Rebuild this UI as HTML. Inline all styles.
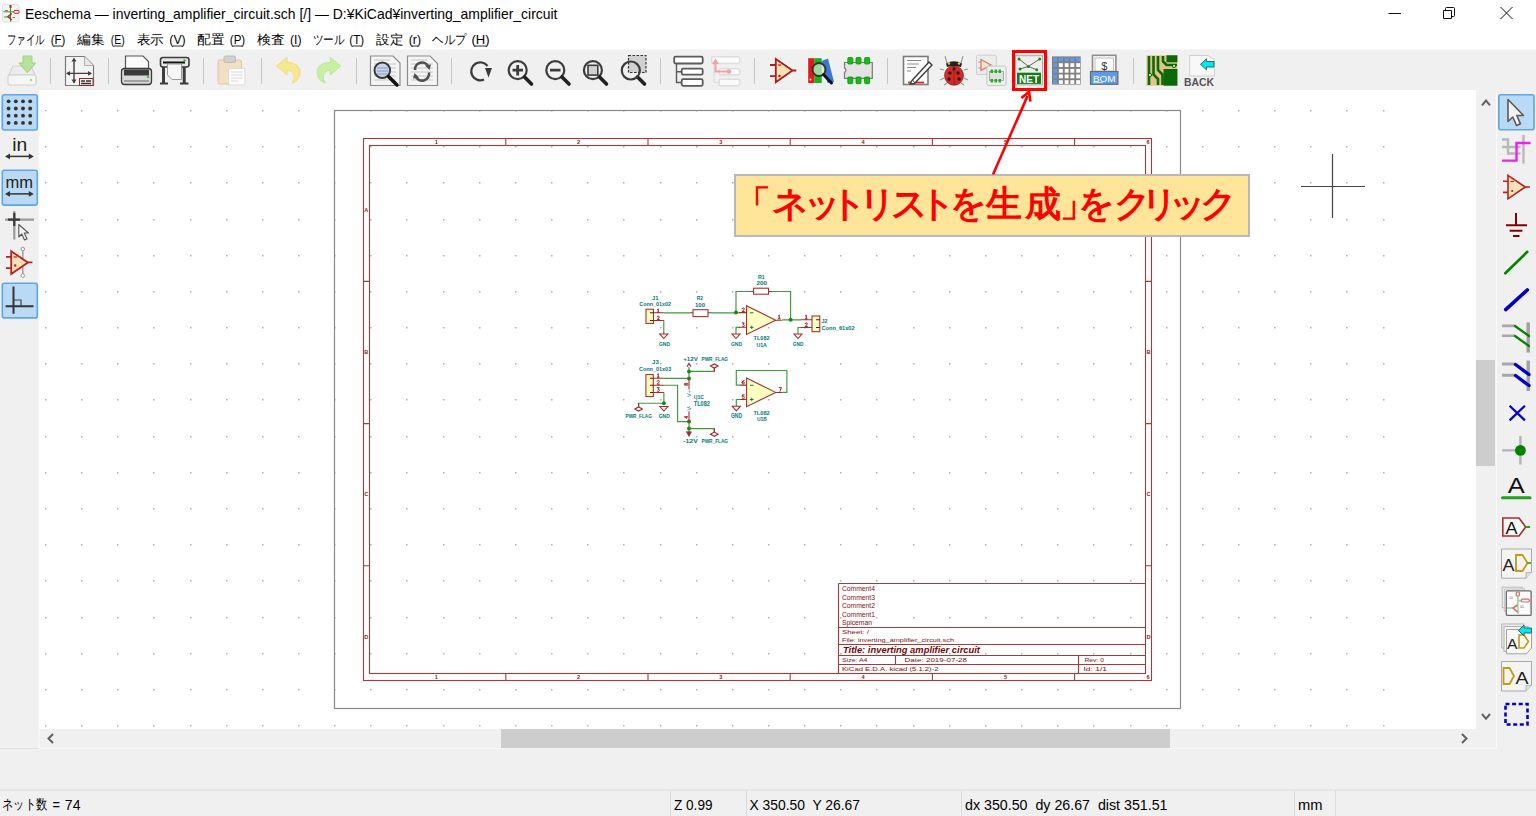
<!DOCTYPE html>
<html><head><meta charset="utf-8"><title>Eeschema</title>
<style>
html,body{margin:0;padding:0;}
body{width:1536px;height:816px;overflow:hidden;position:relative;background:#f0f0f0;font-family:"Liberation Sans",sans-serif;}
svg{position:absolute;left:0;top:0;display:block;}
</style></head><body>
<svg width="1536" height="816" viewBox="0 0 1536 816">
<rect x="0" y="0" width="1536" height="49" fill="#fff"/><rect x="0" y="49" width="1536" height="767" fill="#f0f0f0"/><rect x="0" y="49" width="1536" height="1" fill="#f6f6f6"/><rect x="39" y="90" width="1437" height="639" fill="#fff"/><rect x="0" y="748" width="39" height="1" fill="#e2e2e2"/><rect x="1476" y="90" width="20" height="658" fill="#f0f0f0"/><rect x="39" y="729" width="1437" height="19" fill="#f0f0f0"/><rect x="1476" y="360" width="19" height="106" fill="#cdcdcd"/><rect x="501" y="729" width="669" height="19" fill="#cdcdcd"/><path d="M1482 105.3L1486 100.5L1490 105.3M1482 714L1486 718.8L1490 714" stroke="#606060" stroke-width="2" fill="none"/><path d="M53 734L48.5 738.5L53 743M1462 734L1466.5 738.5L1462 743" stroke="#606060" stroke-width="2" fill="none"/><rect x="39" y="748" width="1457" height="1" fill="#f8f8f8"/><rect x="1496" y="90" width="1" height="658" fill="#fafafa"/><rect x="0" y="789" width="1536" height="2" fill="#e4e4e4"/><rect x="670" y="791" width="1" height="25" fill="#dadada"/><rect x="746" y="791" width="1" height="25" fill="#dadada"/><rect x="961" y="791" width="1" height="25" fill="#dadada"/><rect x="1294" y="791" width="1" height="25" fill="#dadada"/><rect x="1335" y="791" width="1" height="25" fill="#dadada"/><rect x="54.1" y="45.5" width="7.9" height="1" fill="#333"/><rect x="114.0" y="45.5" width="7.4" height="1" fill="#333"/><rect x="172.6" y="45.5" width="9.8" height="1" fill="#333"/><rect x="233.1" y="45.5" width="8.8" height="1" fill="#333"/><rect x="293.2" y="45.5" width="5.0" height="1" fill="#333"/><rect x="352.6" y="45.5" width="8.2" height="1" fill="#333"/><rect x="412.0" y="45.5" width="5.8" height="1" fill="#333"/><rect x="474.7" y="45.5" width="11.5" height="1" fill="#333"/>
<svg x="39" y="90" width="1437" height="639" viewBox="39 90 1437 639">
<path d="M45 110h1.5v1.2h-1.5zM81 110h1.5v1.4h-1.5zM117 110h1.5v1.4h-1.5zM153 110h1.5v1.4h-1.5zM190 110h1.5v1.4h-1.5zM226 110h1.5v1.4h-1.5zM262 110h1.5v1.4h-1.5zM298 110h1.5v1.4h-1.5zM334 110h1.5v1.4h-1.5zM370 110h1.5v1.4h-1.5zM406 110h1.5v1.4h-1.5zM443 110h1.5v1.4h-1.5zM479 110h1.5v1.4h-1.5zM515 110h1.5v1.4h-1.5zM551 110h1.5v1.4h-1.5zM587 110h1.5v1.4h-1.5zM623 110h1.5v1.4h-1.5zM660 110h1.5v1.4h-1.5zM696 110h1.5v1.4h-1.5zM732 110h1.5v1.4h-1.5zM768 110h1.5v1.4h-1.5zM804 110h1.5v1.4h-1.5zM840 110h1.5v1.4h-1.5zM876 110h1.5v1.4h-1.5zM913 110h1.5v1.4h-1.5zM949 110h1.5v1.4h-1.5zM985 110h1.5v1.4h-1.5zM1021 110h1.5v1.4h-1.5zM1057 110h1.5v1.4h-1.5zM1093 110h1.5v1.4h-1.5zM1130 110h1.5v1.4h-1.5zM1166 110h1.5v1.4h-1.5zM1202 110h1.5v1.4h-1.5zM1238 110h1.5v1.4h-1.5zM1274 110h1.5v1.4h-1.5zM1310 110h1.5v1.4h-1.5zM1346 110h1.5v1.4h-1.5zM1383 110h1.5v1.4h-1.5zM45 146h1.5v1.4h-1.5zM81 146h1.5v1.4h-1.5zM117 146h1.5v1.4h-1.5zM153 146h1.5v1.4h-1.5zM190 146h1.5v1.4h-1.5zM226 146h1.5v1.4h-1.5zM262 146h1.5v1.4h-1.5zM298 146h1.5v1.4h-1.5zM334 146h1.5v1.4h-1.5zM370 146h1.5v1.4h-1.5zM406 146h1.5v1.4h-1.5zM443 146h1.5v1.4h-1.5zM479 146h1.5v1.4h-1.5zM515 146h1.5v1.4h-1.5zM551 146h1.5v1.4h-1.5zM587 146h1.5v1.4h-1.5zM623 146h1.5v1.4h-1.5zM660 146h1.5v1.4h-1.5zM696 146h1.5v1.4h-1.5zM732 146h1.5v1.4h-1.5zM768 146h1.5v1.4h-1.5zM804 146h1.5v1.4h-1.5zM840 146h1.5v1.4h-1.5zM876 146h1.5v1.4h-1.5zM913 146h1.5v1.4h-1.5zM949 146h1.5v1.4h-1.5zM985 146h1.5v1.4h-1.5zM1021 146h1.5v1.4h-1.5zM1057 146h1.5v1.4h-1.5zM1093 146h1.5v1.4h-1.5zM1130 146h1.5v1.4h-1.5zM1166 146h1.5v1.4h-1.5zM1202 146h1.5v1.4h-1.5zM1238 146h1.5v1.4h-1.5zM1274 146h1.5v1.4h-1.5zM1310 146h1.5v1.4h-1.5zM1346 146h1.5v1.4h-1.5zM1383 146h1.5v1.4h-1.5zM45 182h1.5v1.4h-1.5zM81 182h1.5v1.4h-1.5zM117 182h1.5v1.4h-1.5zM153 182h1.5v1.4h-1.5zM190 182h1.5v1.4h-1.5zM226 182h1.5v1.4h-1.5zM262 182h1.5v1.4h-1.5zM298 182h1.5v1.4h-1.5zM334 182h1.5v1.4h-1.5zM370 182h1.5v1.4h-1.5zM406 182h1.5v1.4h-1.5zM443 182h1.5v1.4h-1.5zM479 182h1.5v1.4h-1.5zM515 182h1.5v1.4h-1.5zM551 182h1.5v1.4h-1.5zM587 182h1.5v1.4h-1.5zM623 182h1.5v1.4h-1.5zM660 182h1.5v1.4h-1.5zM696 182h1.5v1.4h-1.5zM732 182h1.5v1.4h-1.5zM768 182h1.5v1.4h-1.5zM804 182h1.5v1.4h-1.5zM840 182h1.5v1.4h-1.5zM876 182h1.5v1.4h-1.5zM913 182h1.5v1.4h-1.5zM949 182h1.5v1.4h-1.5zM985 182h1.5v1.4h-1.5zM1021 182h1.5v1.4h-1.5zM1057 182h1.5v1.4h-1.5zM1093 182h1.5v1.4h-1.5zM1130 182h1.5v1.4h-1.5zM1166 182h1.5v1.4h-1.5zM1202 182h1.5v1.4h-1.5zM1238 182h1.5v1.4h-1.5zM1274 182h1.5v1.4h-1.5zM1310 182h1.5v1.4h-1.5zM1346 182h1.5v1.4h-1.5zM1383 182h1.5v1.4h-1.5zM45 219h1.5v1.4h-1.5zM81 219h1.5v1.4h-1.5zM117 219h1.5v1.4h-1.5zM153 219h1.5v1.4h-1.5zM190 219h1.5v1.4h-1.5zM226 219h1.5v1.4h-1.5zM262 219h1.5v1.4h-1.5zM298 219h1.5v1.4h-1.5zM334 219h1.5v1.4h-1.5zM370 219h1.5v1.4h-1.5zM406 219h1.5v1.4h-1.5zM443 219h1.5v1.4h-1.5zM479 219h1.5v1.4h-1.5zM515 219h1.5v1.4h-1.5zM551 219h1.5v1.4h-1.5zM587 219h1.5v1.4h-1.5zM623 219h1.5v1.4h-1.5zM660 219h1.5v1.4h-1.5zM696 219h1.5v1.4h-1.5zM732 219h1.5v1.4h-1.5zM768 219h1.5v1.4h-1.5zM804 219h1.5v1.4h-1.5zM840 219h1.5v1.4h-1.5zM876 219h1.5v1.4h-1.5zM913 219h1.5v1.4h-1.5zM949 219h1.5v1.4h-1.5zM985 219h1.5v1.4h-1.5zM1021 219h1.5v1.4h-1.5zM1057 219h1.5v1.4h-1.5zM1093 219h1.5v1.4h-1.5zM1130 219h1.5v1.4h-1.5zM1166 219h1.5v1.4h-1.5zM1202 219h1.5v1.4h-1.5zM1238 219h1.5v1.4h-1.5zM1274 219h1.5v1.4h-1.5zM1310 219h1.5v1.4h-1.5zM1346 219h1.5v1.4h-1.5zM1383 219h1.5v1.4h-1.5zM45 255h1.5v1.4h-1.5zM81 255h1.5v1.4h-1.5zM117 255h1.5v1.4h-1.5zM153 255h1.5v1.4h-1.5zM190 255h1.5v1.4h-1.5zM226 255h1.5v1.4h-1.5zM262 255h1.5v1.4h-1.5zM298 255h1.5v1.4h-1.5zM334 255h1.5v1.4h-1.5zM370 255h1.5v1.4h-1.5zM406 255h1.5v1.4h-1.5zM443 255h1.5v1.4h-1.5zM479 255h1.5v1.4h-1.5zM515 255h1.5v1.4h-1.5zM551 255h1.5v1.4h-1.5zM587 255h1.5v1.4h-1.5zM623 255h1.5v1.4h-1.5zM660 255h1.5v1.4h-1.5zM696 255h1.5v1.4h-1.5zM732 255h1.5v1.4h-1.5zM768 255h1.5v1.4h-1.5zM804 255h1.5v1.4h-1.5zM840 255h1.5v1.4h-1.5zM876 255h1.5v1.4h-1.5zM913 255h1.5v1.4h-1.5zM949 255h1.5v1.4h-1.5zM985 255h1.5v1.4h-1.5zM1021 255h1.5v1.4h-1.5zM1057 255h1.5v1.4h-1.5zM1093 255h1.5v1.4h-1.5zM1130 255h1.5v1.4h-1.5zM1166 255h1.5v1.4h-1.5zM1202 255h1.5v1.4h-1.5zM1238 255h1.5v1.4h-1.5zM1274 255h1.5v1.4h-1.5zM1310 255h1.5v1.4h-1.5zM1346 255h1.5v1.4h-1.5zM1383 255h1.5v1.4h-1.5zM45 291h1.5v1.4h-1.5zM81 291h1.5v1.4h-1.5zM117 291h1.5v1.4h-1.5zM153 291h1.5v1.4h-1.5zM190 291h1.5v1.4h-1.5zM226 291h1.5v1.4h-1.5zM262 291h1.5v1.4h-1.5zM298 291h1.5v1.4h-1.5zM334 291h1.5v1.4h-1.5zM370 291h1.5v1.4h-1.5zM406 291h1.5v1.4h-1.5zM443 291h1.5v1.4h-1.5zM479 291h1.5v1.4h-1.5zM515 291h1.5v1.4h-1.5zM551 291h1.5v1.4h-1.5zM587 291h1.5v1.4h-1.5zM623 291h1.5v1.4h-1.5zM660 291h1.5v1.4h-1.5zM696 291h1.5v1.4h-1.5zM732 291h1.5v1.4h-1.5zM768 291h1.5v1.4h-1.5zM804 291h1.5v1.4h-1.5zM840 291h1.5v1.4h-1.5zM876 291h1.5v1.4h-1.5zM913 291h1.5v1.4h-1.5zM949 291h1.5v1.4h-1.5zM985 291h1.5v1.4h-1.5zM1021 291h1.5v1.4h-1.5zM1057 291h1.5v1.4h-1.5zM1093 291h1.5v1.4h-1.5zM1130 291h1.5v1.4h-1.5zM1166 291h1.5v1.4h-1.5zM1202 291h1.5v1.4h-1.5zM1238 291h1.5v1.4h-1.5zM1274 291h1.5v1.4h-1.5zM1310 291h1.5v1.4h-1.5zM1346 291h1.5v1.4h-1.5zM1383 291h1.5v1.4h-1.5zM45 327h1.5v1.4h-1.5zM81 327h1.5v1.4h-1.5zM117 327h1.5v1.4h-1.5zM153 327h1.5v1.4h-1.5zM190 327h1.5v1.4h-1.5zM226 327h1.5v1.4h-1.5zM262 327h1.5v1.4h-1.5zM298 327h1.5v1.4h-1.5zM334 327h1.5v1.4h-1.5zM370 327h1.5v1.4h-1.5zM406 327h1.5v1.4h-1.5zM443 327h1.5v1.4h-1.5zM479 327h1.5v1.4h-1.5zM515 327h1.5v1.4h-1.5zM551 327h1.5v1.4h-1.5zM587 327h1.5v1.4h-1.5zM623 327h1.5v1.4h-1.5zM660 327h1.5v1.4h-1.5zM696 327h1.5v1.4h-1.5zM732 327h1.5v1.4h-1.5zM768 327h1.5v1.4h-1.5zM804 327h1.5v1.4h-1.5zM840 327h1.5v1.4h-1.5zM876 327h1.5v1.4h-1.5zM913 327h1.5v1.4h-1.5zM949 327h1.5v1.4h-1.5zM985 327h1.5v1.4h-1.5zM1021 327h1.5v1.4h-1.5zM1057 327h1.5v1.4h-1.5zM1093 327h1.5v1.4h-1.5zM1130 327h1.5v1.4h-1.5zM1166 327h1.5v1.4h-1.5zM1202 327h1.5v1.4h-1.5zM1238 327h1.5v1.4h-1.5zM1274 327h1.5v1.4h-1.5zM1310 327h1.5v1.4h-1.5zM1346 327h1.5v1.4h-1.5zM1383 327h1.5v1.4h-1.5zM45 363h1.5v1.4h-1.5zM81 363h1.5v1.4h-1.5zM117 363h1.5v1.4h-1.5zM153 363h1.5v1.4h-1.5zM190 363h1.5v1.4h-1.5zM226 363h1.5v1.4h-1.5zM262 363h1.5v1.4h-1.5zM298 363h1.5v1.4h-1.5zM334 363h1.5v1.4h-1.5zM370 363h1.5v1.4h-1.5zM406 363h1.5v1.4h-1.5zM443 363h1.5v1.4h-1.5zM479 363h1.5v1.4h-1.5zM515 363h1.5v1.4h-1.5zM551 363h1.5v1.4h-1.5zM587 363h1.5v1.4h-1.5zM623 363h1.5v1.4h-1.5zM660 363h1.5v1.4h-1.5zM696 363h1.5v1.4h-1.5zM732 363h1.5v1.4h-1.5zM768 363h1.5v1.4h-1.5zM804 363h1.5v1.4h-1.5zM840 363h1.5v1.4h-1.5zM876 363h1.5v1.4h-1.5zM913 363h1.5v1.4h-1.5zM949 363h1.5v1.4h-1.5zM985 363h1.5v1.4h-1.5zM1021 363h1.5v1.4h-1.5zM1057 363h1.5v1.4h-1.5zM1093 363h1.5v1.4h-1.5zM1130 363h1.5v1.4h-1.5zM1166 363h1.5v1.4h-1.5zM1202 363h1.5v1.4h-1.5zM1238 363h1.5v1.4h-1.5zM1274 363h1.5v1.4h-1.5zM1310 363h1.5v1.4h-1.5zM1346 363h1.5v1.4h-1.5zM1383 363h1.5v1.4h-1.5zM45 399h1.5v1.4h-1.5zM81 399h1.5v1.4h-1.5zM117 399h1.5v1.4h-1.5zM153 399h1.5v1.4h-1.5zM190 399h1.5v1.4h-1.5zM226 399h1.5v1.4h-1.5zM262 399h1.5v1.4h-1.5zM298 399h1.5v1.4h-1.5zM334 399h1.5v1.4h-1.5zM370 399h1.5v1.4h-1.5zM406 399h1.5v1.4h-1.5zM443 399h1.5v1.4h-1.5zM479 399h1.5v1.4h-1.5zM515 399h1.5v1.4h-1.5zM551 399h1.5v1.4h-1.5zM587 399h1.5v1.4h-1.5zM623 399h1.5v1.4h-1.5zM660 399h1.5v1.4h-1.5zM696 399h1.5v1.4h-1.5zM732 399h1.5v1.4h-1.5zM768 399h1.5v1.4h-1.5zM804 399h1.5v1.4h-1.5zM840 399h1.5v1.4h-1.5zM876 399h1.5v1.4h-1.5zM913 399h1.5v1.4h-1.5zM949 399h1.5v1.4h-1.5zM985 399h1.5v1.4h-1.5zM1021 399h1.5v1.4h-1.5zM1057 399h1.5v1.4h-1.5zM1093 399h1.5v1.4h-1.5zM1130 399h1.5v1.4h-1.5zM1166 399h1.5v1.4h-1.5zM1202 399h1.5v1.4h-1.5zM1238 399h1.5v1.4h-1.5zM1274 399h1.5v1.4h-1.5zM1310 399h1.5v1.4h-1.5zM1346 399h1.5v1.4h-1.5zM1383 399h1.5v1.4h-1.5zM45 436h1.5v1.4h-1.5zM81 436h1.5v1.4h-1.5zM117 436h1.5v1.4h-1.5zM153 436h1.5v1.4h-1.5zM190 436h1.5v1.4h-1.5zM226 436h1.5v1.4h-1.5zM262 436h1.5v1.4h-1.5zM298 436h1.5v1.4h-1.5zM334 436h1.5v1.4h-1.5zM370 436h1.5v1.4h-1.5zM406 436h1.5v1.4h-1.5zM443 436h1.5v1.4h-1.5zM479 436h1.5v1.4h-1.5zM515 436h1.5v1.4h-1.5zM551 436h1.5v1.4h-1.5zM587 436h1.5v1.4h-1.5zM623 436h1.5v1.4h-1.5zM660 436h1.5v1.4h-1.5zM696 436h1.5v1.4h-1.5zM732 436h1.5v1.4h-1.5zM768 436h1.5v1.4h-1.5zM804 436h1.5v1.4h-1.5zM840 436h1.5v1.4h-1.5zM876 436h1.5v1.4h-1.5zM913 436h1.5v1.4h-1.5zM949 436h1.5v1.4h-1.5zM985 436h1.5v1.4h-1.5zM1021 436h1.5v1.4h-1.5zM1057 436h1.5v1.4h-1.5zM1093 436h1.5v1.4h-1.5zM1130 436h1.5v1.4h-1.5zM1166 436h1.5v1.4h-1.5zM1202 436h1.5v1.4h-1.5zM1238 436h1.5v1.4h-1.5zM1274 436h1.5v1.4h-1.5zM1310 436h1.5v1.4h-1.5zM1346 436h1.5v1.4h-1.5zM1383 436h1.5v1.4h-1.5zM45 472h1.5v1.4h-1.5zM81 472h1.5v1.4h-1.5zM117 472h1.5v1.4h-1.5zM153 472h1.5v1.4h-1.5zM190 472h1.5v1.4h-1.5zM226 472h1.5v1.4h-1.5zM262 472h1.5v1.4h-1.5zM298 472h1.5v1.4h-1.5zM334 472h1.5v1.4h-1.5zM370 472h1.5v1.4h-1.5zM406 472h1.5v1.4h-1.5zM443 472h1.5v1.4h-1.5zM479 472h1.5v1.4h-1.5zM515 472h1.5v1.4h-1.5zM551 472h1.5v1.4h-1.5zM587 472h1.5v1.4h-1.5zM623 472h1.5v1.4h-1.5zM660 472h1.5v1.4h-1.5zM696 472h1.5v1.4h-1.5zM732 472h1.5v1.4h-1.5zM768 472h1.5v1.4h-1.5zM804 472h1.5v1.4h-1.5zM840 472h1.5v1.4h-1.5zM876 472h1.5v1.4h-1.5zM913 472h1.5v1.4h-1.5zM949 472h1.5v1.4h-1.5zM985 472h1.5v1.4h-1.5zM1021 472h1.5v1.4h-1.5zM1057 472h1.5v1.4h-1.5zM1093 472h1.5v1.4h-1.5zM1130 472h1.5v1.4h-1.5zM1166 472h1.5v1.4h-1.5zM1202 472h1.5v1.4h-1.5zM1238 472h1.5v1.4h-1.5zM1274 472h1.5v1.4h-1.5zM1310 472h1.5v1.4h-1.5zM1346 472h1.5v1.4h-1.5zM1383 472h1.5v1.4h-1.5zM45 508h1.5v1.4h-1.5zM81 508h1.5v1.4h-1.5zM117 508h1.5v1.4h-1.5zM153 508h1.5v1.4h-1.5zM190 508h1.5v1.4h-1.5zM226 508h1.5v1.4h-1.5zM262 508h1.5v1.4h-1.5zM298 508h1.5v1.4h-1.5zM334 508h1.5v1.4h-1.5zM370 508h1.5v1.4h-1.5zM406 508h1.5v1.4h-1.5zM443 508h1.5v1.4h-1.5zM479 508h1.5v1.4h-1.5zM515 508h1.5v1.4h-1.5zM551 508h1.5v1.4h-1.5zM587 508h1.5v1.4h-1.5zM623 508h1.5v1.4h-1.5zM660 508h1.5v1.4h-1.5zM696 508h1.5v1.4h-1.5zM732 508h1.5v1.4h-1.5zM768 508h1.5v1.4h-1.5zM804 508h1.5v1.4h-1.5zM840 508h1.5v1.4h-1.5zM876 508h1.5v1.4h-1.5zM913 508h1.5v1.4h-1.5zM949 508h1.5v1.4h-1.5zM985 508h1.5v1.4h-1.5zM1021 508h1.5v1.4h-1.5zM1057 508h1.5v1.4h-1.5zM1093 508h1.5v1.4h-1.5zM1130 508h1.5v1.4h-1.5zM1166 508h1.5v1.4h-1.5zM1202 508h1.5v1.4h-1.5zM1238 508h1.5v1.4h-1.5zM1274 508h1.5v1.4h-1.5zM1310 508h1.5v1.4h-1.5zM1346 508h1.5v1.4h-1.5zM1383 508h1.5v1.4h-1.5zM45 544h1.5v1.4h-1.5zM81 544h1.5v1.4h-1.5zM117 544h1.5v1.4h-1.5zM153 544h1.5v1.4h-1.5zM190 544h1.5v1.4h-1.5zM226 544h1.5v1.4h-1.5zM262 544h1.5v1.4h-1.5zM298 544h1.5v1.4h-1.5zM334 544h1.5v1.4h-1.5zM370 544h1.5v1.4h-1.5zM406 544h1.5v1.4h-1.5zM443 544h1.5v1.4h-1.5zM479 544h1.5v1.4h-1.5zM515 544h1.5v1.4h-1.5zM551 544h1.5v1.4h-1.5zM587 544h1.5v1.4h-1.5zM623 544h1.5v1.4h-1.5zM660 544h1.5v1.4h-1.5zM696 544h1.5v1.4h-1.5zM732 544h1.5v1.4h-1.5zM768 544h1.5v1.4h-1.5zM804 544h1.5v1.4h-1.5zM840 544h1.5v1.4h-1.5zM876 544h1.5v1.4h-1.5zM913 544h1.5v1.4h-1.5zM949 544h1.5v1.4h-1.5zM985 544h1.5v1.4h-1.5zM1021 544h1.5v1.4h-1.5zM1057 544h1.5v1.4h-1.5zM1093 544h1.5v1.4h-1.5zM1130 544h1.5v1.4h-1.5zM1166 544h1.5v1.4h-1.5zM1202 544h1.5v1.4h-1.5zM1238 544h1.5v1.4h-1.5zM1274 544h1.5v1.4h-1.5zM1310 544h1.5v1.4h-1.5zM1346 544h1.5v1.4h-1.5zM1383 544h1.5v1.4h-1.5zM45 580h1.5v1.4h-1.5zM81 580h1.5v1.4h-1.5zM117 580h1.5v1.4h-1.5zM153 580h1.5v1.4h-1.5zM190 580h1.5v1.4h-1.5zM226 580h1.5v1.4h-1.5zM262 580h1.5v1.4h-1.5zM298 580h1.5v1.4h-1.5zM334 580h1.5v1.4h-1.5zM370 580h1.5v1.4h-1.5zM406 580h1.5v1.4h-1.5zM443 580h1.5v1.4h-1.5zM479 580h1.5v1.4h-1.5zM515 580h1.5v1.4h-1.5zM551 580h1.5v1.4h-1.5zM587 580h1.5v1.4h-1.5zM623 580h1.5v1.4h-1.5zM660 580h1.5v1.4h-1.5zM696 580h1.5v1.4h-1.5zM732 580h1.5v1.4h-1.5zM768 580h1.5v1.4h-1.5zM804 580h1.5v1.4h-1.5zM840 580h1.5v1.4h-1.5zM876 580h1.5v1.4h-1.5zM913 580h1.5v1.4h-1.5zM949 580h1.5v1.4h-1.5zM985 580h1.5v1.4h-1.5zM1021 580h1.5v1.4h-1.5zM1057 580h1.5v1.4h-1.5zM1093 580h1.5v1.4h-1.5zM1130 580h1.5v1.4h-1.5zM1166 580h1.5v1.4h-1.5zM1202 580h1.5v1.4h-1.5zM1238 580h1.5v1.4h-1.5zM1274 580h1.5v1.4h-1.5zM1310 580h1.5v1.4h-1.5zM1346 580h1.5v1.4h-1.5zM1383 580h1.5v1.4h-1.5zM45 617h1.5v1.4h-1.5zM81 617h1.5v1.4h-1.5zM117 617h1.5v1.4h-1.5zM153 617h1.5v1.4h-1.5zM190 617h1.5v1.4h-1.5zM226 617h1.5v1.4h-1.5zM262 617h1.5v1.4h-1.5zM298 617h1.5v1.4h-1.5zM334 617h1.5v1.4h-1.5zM370 617h1.5v1.4h-1.5zM406 617h1.5v1.4h-1.5zM443 617h1.5v1.4h-1.5zM479 617h1.5v1.4h-1.5zM515 617h1.5v1.4h-1.5zM551 617h1.5v1.4h-1.5zM587 617h1.5v1.4h-1.5zM623 617h1.5v1.4h-1.5zM660 617h1.5v1.4h-1.5zM696 617h1.5v1.4h-1.5zM732 617h1.5v1.4h-1.5zM768 617h1.5v1.4h-1.5zM804 617h1.5v1.4h-1.5zM840 617h1.5v1.4h-1.5zM876 617h1.5v1.4h-1.5zM913 617h1.5v1.4h-1.5zM949 617h1.5v1.4h-1.5zM985 617h1.5v1.4h-1.5zM1021 617h1.5v1.4h-1.5zM1057 617h1.5v1.4h-1.5zM1093 617h1.5v1.4h-1.5zM1130 617h1.5v1.4h-1.5zM1166 617h1.5v1.4h-1.5zM1202 617h1.5v1.4h-1.5zM1238 617h1.5v1.4h-1.5zM1274 617h1.5v1.4h-1.5zM1310 617h1.5v1.4h-1.5zM1346 617h1.5v1.4h-1.5zM1383 617h1.5v1.4h-1.5zM45 653h1.5v1.4h-1.5zM81 653h1.5v1.4h-1.5zM117 653h1.5v1.4h-1.5zM153 653h1.5v1.4h-1.5zM190 653h1.5v1.4h-1.5zM226 653h1.5v1.4h-1.5zM262 653h1.5v1.4h-1.5zM298 653h1.5v1.4h-1.5zM334 653h1.5v1.4h-1.5zM370 653h1.5v1.4h-1.5zM406 653h1.5v1.4h-1.5zM443 653h1.5v1.4h-1.5zM479 653h1.5v1.4h-1.5zM515 653h1.5v1.4h-1.5zM551 653h1.5v1.4h-1.5zM587 653h1.5v1.4h-1.5zM623 653h1.5v1.4h-1.5zM660 653h1.5v1.4h-1.5zM696 653h1.5v1.4h-1.5zM732 653h1.5v1.4h-1.5zM768 653h1.5v1.4h-1.5zM804 653h1.5v1.4h-1.5zM840 653h1.5v1.4h-1.5zM876 653h1.5v1.4h-1.5zM913 653h1.5v1.4h-1.5zM949 653h1.5v1.4h-1.5zM985 653h1.5v1.4h-1.5zM1021 653h1.5v1.4h-1.5zM1057 653h1.5v1.4h-1.5zM1093 653h1.5v1.4h-1.5zM1130 653h1.5v1.4h-1.5zM1166 653h1.5v1.4h-1.5zM1202 653h1.5v1.4h-1.5zM1238 653h1.5v1.4h-1.5zM1274 653h1.5v1.4h-1.5zM1310 653h1.5v1.4h-1.5zM1346 653h1.5v1.4h-1.5zM1383 653h1.5v1.4h-1.5zM45 689h1.5v1.4h-1.5zM81 689h1.5v1.4h-1.5zM117 689h1.5v1.4h-1.5zM153 689h1.5v1.4h-1.5zM190 689h1.5v1.4h-1.5zM226 689h1.5v1.4h-1.5zM262 689h1.5v1.4h-1.5zM298 689h1.5v1.4h-1.5zM334 689h1.5v1.4h-1.5zM370 689h1.5v1.4h-1.5zM406 689h1.5v1.4h-1.5zM443 689h1.5v1.4h-1.5zM479 689h1.5v1.4h-1.5zM515 689h1.5v1.4h-1.5zM551 689h1.5v1.4h-1.5zM587 689h1.5v1.4h-1.5zM623 689h1.5v1.4h-1.5zM660 689h1.5v1.4h-1.5zM696 689h1.5v1.4h-1.5zM732 689h1.5v1.4h-1.5zM768 689h1.5v1.4h-1.5zM804 689h1.5v1.4h-1.5zM840 689h1.5v1.4h-1.5zM876 689h1.5v1.4h-1.5zM913 689h1.5v1.4h-1.5zM949 689h1.5v1.4h-1.5zM985 689h1.5v1.4h-1.5zM1021 689h1.5v1.4h-1.5zM1057 689h1.5v1.4h-1.5zM1093 689h1.5v1.4h-1.5zM1130 689h1.5v1.4h-1.5zM1166 689h1.5v1.4h-1.5zM1202 689h1.5v1.4h-1.5zM1238 689h1.5v1.4h-1.5zM1274 689h1.5v1.4h-1.5zM1310 689h1.5v1.4h-1.5zM1346 689h1.5v1.4h-1.5zM1383 689h1.5v1.4h-1.5zM45 725h1.5v1.4h-1.5zM81 725h1.5v1.4h-1.5zM117 725h1.5v1.4h-1.5zM153 725h1.5v1.4h-1.5zM190 725h1.5v1.4h-1.5zM226 725h1.5v1.4h-1.5zM262 725h1.5v1.4h-1.5zM298 725h1.5v1.4h-1.5zM334 725h1.5v1.4h-1.5zM370 725h1.5v1.4h-1.5zM406 725h1.5v1.4h-1.5zM443 725h1.5v1.4h-1.5zM479 725h1.5v1.4h-1.5zM515 725h1.5v1.4h-1.5zM551 725h1.5v1.4h-1.5zM587 725h1.5v1.4h-1.5zM623 725h1.5v1.4h-1.5zM660 725h1.5v1.4h-1.5zM696 725h1.5v1.4h-1.5zM732 725h1.5v1.4h-1.5zM768 725h1.5v1.4h-1.5zM804 725h1.5v1.4h-1.5zM840 725h1.5v1.4h-1.5zM876 725h1.5v1.4h-1.5zM913 725h1.5v1.4h-1.5zM949 725h1.5v1.4h-1.5zM985 725h1.5v1.4h-1.5zM1021 725h1.5v1.4h-1.5zM1057 725h1.5v1.4h-1.5zM1093 725h1.5v1.4h-1.5zM1130 725h1.5v1.4h-1.5zM1166 725h1.5v1.4h-1.5zM1202 725h1.5v1.4h-1.5zM1238 725h1.5v1.4h-1.5zM1274 725h1.5v1.4h-1.5zM1310 725h1.5v1.4h-1.5zM1346 725h1.5v1.4h-1.5zM1383 725h1.5v1.4h-1.5z" fill="#b0b0b0"/><rect x="334.5" y="110.5" width="846" height="598" fill="none" stroke="#8a8a8a" stroke-width="1.2"/>
<g stroke="#a63a3a" stroke-width="1.1" fill="none">
<rect x="363.5" y="138.5" width="788" height="542"/>
<rect x="369.5" y="145.5" width="776" height="528"/>
<path d="M505.8 138.5V145.5M505.8 673.5V680.5M648.0 138.5V145.5M648.0 673.5V680.5M790.2 138.5V145.5M790.2 673.5V680.5M932.4 138.5V145.5M932.4 673.5V680.5M1074.6 138.5V145.5M1074.6 673.5V680.5M363.5 281.4H369.5M1145.5 281.4H1151.5M363.5 423.6H369.5M1145.5 423.6H1151.5M363.5 565.8H369.5M1145.5 565.8H1151.5M838.5 583.5V673.5M838.5 583.5H1145.5M838.5 627.5H1145.5M838.5 644.5H1145.5M838.5 655.5H1145.5M838.5 664.5H1145.5M895.5 655.5V664.5M1078.5 655.5V673.5"/>
</g>
<text x="436.2" y="144" font-size="5.6" font-weight="bold" text-anchor="middle" font-family="Liberation Sans" fill="#8a1a1a">1</text>
<text x="436.2" y="679" font-size="5.6" font-weight="bold" text-anchor="middle" font-family="Liberation Sans" fill="#8a1a1a">1</text>
<text x="578.5" y="144" font-size="5.6" font-weight="bold" text-anchor="middle" font-family="Liberation Sans" fill="#8a1a1a">2</text>
<text x="578.5" y="679" font-size="5.6" font-weight="bold" text-anchor="middle" font-family="Liberation Sans" fill="#8a1a1a">2</text>
<text x="720.8" y="144" font-size="5.6" font-weight="bold" text-anchor="middle" font-family="Liberation Sans" fill="#8a1a1a">3</text>
<text x="720.8" y="679" font-size="5.6" font-weight="bold" text-anchor="middle" font-family="Liberation Sans" fill="#8a1a1a">3</text>
<text x="863" y="144" font-size="5.6" font-weight="bold" text-anchor="middle" font-family="Liberation Sans" fill="#8a1a1a">4</text>
<text x="863" y="679" font-size="5.6" font-weight="bold" text-anchor="middle" font-family="Liberation Sans" fill="#8a1a1a">4</text>
<text x="1005.5" y="144" font-size="5.6" font-weight="bold" text-anchor="middle" font-family="Liberation Sans" fill="#8a1a1a">5</text>
<text x="1005.5" y="679" font-size="5.6" font-weight="bold" text-anchor="middle" font-family="Liberation Sans" fill="#8a1a1a">5</text>
<text x="1148" y="144" font-size="5.6" font-weight="bold" text-anchor="middle" font-family="Liberation Sans" fill="#8a1a1a">6</text>
<text x="1148" y="679" font-size="5.6" font-weight="bold" text-anchor="middle" font-family="Liberation Sans" fill="#8a1a1a">6</text>
<text x="366.3" y="211.8" font-size="5.6" font-weight="bold" text-anchor="middle" font-family="Liberation Sans" fill="#8a1a1a">A</text>
<text x="1148.5" y="211.8" font-size="5.6" font-weight="bold" text-anchor="middle" font-family="Liberation Sans" fill="#8a1a1a">A</text>
<text x="366.3" y="354.3" font-size="5.6" font-weight="bold" text-anchor="middle" font-family="Liberation Sans" fill="#8a1a1a">B</text>
<text x="1148.5" y="354.3" font-size="5.6" font-weight="bold" text-anchor="middle" font-family="Liberation Sans" fill="#8a1a1a">B</text>
<text x="366.3" y="496.3" font-size="5.6" font-weight="bold" text-anchor="middle" font-family="Liberation Sans" fill="#8a1a1a">C</text>
<text x="1148.5" y="496.3" font-size="5.6" font-weight="bold" text-anchor="middle" font-family="Liberation Sans" fill="#8a1a1a">C</text>
<text x="366.3" y="638.8" font-size="5.6" font-weight="bold" text-anchor="middle" font-family="Liberation Sans" fill="#8a1a1a">D</text>
<text x="1148.5" y="638.8" font-size="5.6" font-weight="bold" text-anchor="middle" font-family="Liberation Sans" fill="#8a1a1a">D</text>
<text x="842" y="591.2" font-size="6.5" textLength="33" lengthAdjust="spacingAndGlyphs" font-family="Liberation Sans" font-weight="normal" font-style="normal" fill="#7e1010">Comment4</text>
<text x="842" y="599.8" font-size="6.5" textLength="33" lengthAdjust="spacingAndGlyphs" font-family="Liberation Sans" font-weight="normal" font-style="normal" fill="#7e1010">Comment3</text>
<text x="842" y="608.0" font-size="6.5" textLength="33" lengthAdjust="spacingAndGlyphs" font-family="Liberation Sans" font-weight="normal" font-style="normal" fill="#7e1010">Comment2</text>
<text x="842" y="616.6" font-size="6.5" textLength="33" lengthAdjust="spacingAndGlyphs" font-family="Liberation Sans" font-weight="normal" font-style="normal" fill="#7e1010">Comment1</text>
<text x="842" y="625.2" font-size="6.8" textLength="30" lengthAdjust="spacingAndGlyphs" font-family="Liberation Sans" font-weight="normal" font-style="normal" fill="#7e1010">Spiceman</text>
<text x="842" y="633.8" font-size="6.2" textLength="27" lengthAdjust="spacingAndGlyphs" font-family="Liberation Sans" font-weight="normal" font-style="normal" fill="#7e1010">Sheet: /</text>
<text x="842" y="641.8" font-size="6.2" textLength="112" lengthAdjust="spacingAndGlyphs" font-family="Liberation Sans" font-weight="normal" font-style="normal" fill="#7e1010">File: inverting_amplifier_circuit.sch</text>
<text x="842" y="662.3" font-size="5.8" textLength="25.5" lengthAdjust="spacingAndGlyphs" font-family="Liberation Sans" font-weight="normal" font-style="normal" fill="#7e1010">Size: A4</text>
<text x="904.5" y="662.3" font-size="5.8" textLength="62.5" lengthAdjust="spacingAndGlyphs" font-family="Liberation Sans" font-weight="normal" font-style="normal" fill="#7e1010">Date: 2019-07-28</text>
<text x="842" y="670.8" font-size="5.8" textLength="96.5" lengthAdjust="spacingAndGlyphs" font-family="Liberation Sans" font-weight="normal" font-style="normal" fill="#7e1010">KiCad E.D.A.  kicad (5.1.2)-2</text>
<text x="1084.5" y="662.3" font-size="5.8" textLength="19.5" lengthAdjust="spacingAndGlyphs" font-family="Liberation Sans" font-weight="normal" font-style="normal" fill="#7e1010">Rev: 0</text>
<text x="1083.5" y="670.8" font-size="5.8" textLength="23.5" lengthAdjust="spacingAndGlyphs" font-family="Liberation Sans" font-weight="normal" font-style="normal" fill="#7e1010">Id: 1/1</text>
<text x="843" y="652.8" font-size="8.4" textLength="137" lengthAdjust="spacingAndGlyphs" font-family="Liberation Sans" font-weight="bold" font-style="italic" fill="#700808">Title: inverting amplifier circuit</text><path d="M663.8 312.8H690M711 312.8H739M736 312.8V291.5H751M772.4 291.5H790.6V319.8M782.3 319.8H801M663.8 320.5V332M740 327.3H736V334M801 327.5H798V334M663.9 378.3H689M663.9 385.2H677.6V421.6H689M663.9 392.5V403.2H638.6V407M689 371.4H714.3V368M689 428.6H714.3V432M689 367V378.5M689 421.6V431.8M740 385.1H736.3V370.5H786.9V392.4H782.2M740 399.5H736.3V406.3" stroke="#3c9c3c" stroke-width="1.15" fill="none"/>
<circle cx="736" cy="312.6" r="2" fill="#1a8a1a"/><circle cx="790.6" cy="319.8" r="2" fill="#1a8a1a"/><circle cx="663.9" cy="403.2" r="2" fill="#1a8a1a"/><circle cx="689" cy="371.4" r="2" fill="#1a8a1a"/><circle cx="689" cy="378.4" r="2" fill="#1a8a1a"/><circle cx="689" cy="421.6" r="2" fill="#1a8a1a"/><circle cx="689" cy="428.6" r="2" fill="#1a8a1a"/>
<path d="M650 312.8H663.8M650 320.5H663.8M690 312.8H693M708 312.8H711M751 291.5H753.6M768.5 291.5H772.4M739 312.6H746.5M739 327.3H746.5M775.7 320.2H782.3M801 319.8H816M801 327.5H816M650 378.3H663.9M650 385.2H663.9M650 392.5H663.9M740 385.1H746.6M740 399.5H746.6M775.7 392.4H782.2M689 378.5V389.6M689 411.3V421.6" stroke="#a52a2a" stroke-width="1.05" fill="none"/>
<rect x="646" y="309.2" width="7.5" height="14.2" fill="#ffffc2" stroke="#a52a2a" stroke-width="1.05"/><rect x="812" y="316" width="7.8" height="15.7" fill="#ffffc2" stroke="#a52a2a" stroke-width="1.05"/><rect x="645.9" y="374.6" width="7.4" height="22" fill="#ffffc2" stroke="#a52a2a" stroke-width="1.05"/><rect x="693" y="309.7" width="15" height="6.9" fill="none" stroke="#a52a2a" stroke-width="1.05"/><rect x="753.6" y="288.2" width="14.9" height="6" fill="none" stroke="#a52a2a" stroke-width="1.05"/><path d="M746.5 305.8L775.7 320.2L746.5 334.5Z" fill="#ffffc2" stroke="#a52a2a" stroke-width="1.05"/><path d="M746.6 378L775.7 392.4L746.6 406.7Z" fill="#ffffc2" stroke="#a52a2a" stroke-width="1.05"/><path d="M663.8 332V334M659.8 334H667.8L663.8 338.5ZM732.0 334H740.0L736.0 338.5ZM794.0 334H802.0L798.0 338.5ZM732.3 406.3H740.3L736.3 410.8ZM659.9 406.5H667.9L663.9 411.0Z" fill="none" stroke="#a52a2a" stroke-width="1.1"/><path d="M634.8 409.0L638.6 406.9L642.4 409.0L638.6 411.1ZM710.5 366.0L714.3 363.9L718.1 366.0L714.3 368.1ZM710.5 434.2L714.3 432.1L718.1 434.2L714.3 436.3Z" fill="none" stroke="#a52a2a" stroke-width="1.1"/><path d="M714.3 368.1V371.4M714.3 432.1V428.6M638.6 406.9V403.2" stroke="#a52a2a" stroke-width="1.1"/><path d="M687 366.8L689 363.4L691 366.8" fill="none" stroke="#a52a2a" stroke-width="1.1"/><path d="M686.5 431.8H691.3L689 436.4Z" fill="#a52a2a" stroke="#a52a2a" stroke-width="0.8"/><path d="M650 312.8H653.5M650 320.5H653.5M816 319.8H819.8M816 327.5H819.8M650 378.3H653.3M650 385.2H653.3M650 392.5H653.3" stroke="#6a1010" stroke-width="1.05"/>
<path d="M750 312.8H753.5M750 327.3H753.5M751.75 325.6V329M750 385.3H753.5M750 399.5H753.5M751.75 397.8V401.2" stroke="#007a7a" stroke-width="1"/>
<path d="M657.46 309.48 L658.25 308.80 V312.20 M657.46 312.20 H659.04 M657.20 316.80 Q657.43 316.10 658.25 316.10 Q659.30 316.10 659.30 317.03 Q659.30 317.62 657.20 319.60 H659.30 M742.14 308.64 Q742.39 307.90 743.25 307.90 Q744.36 307.90 744.36 308.89 Q744.36 309.50 742.14 311.60 H744.36 M742.23 322.90 H744.21 L743.13 324.40 Q744.33 324.40 744.33 325.42 Q744.33 326.50 743.25 326.50 Q742.53 326.50 742.17 326.02 M778.39 315.84 L779.25 315.10 V318.80 M778.39 318.80 H780.11 M805.39 315.84 L806.25 315.10 V318.80 M805.39 318.80 H807.11 M805.17 323.62 Q805.41 322.90 806.25 322.90 Q807.33 322.90 807.33 323.86 Q807.33 324.46 805.17 326.50 H807.33 M657.41 374.32 L658.25 373.60 V377.20 M657.41 377.20 H659.09 M657.14 381.24 Q657.39 380.50 658.25 380.50 Q659.36 380.50 659.36 381.49 Q659.36 382.10 657.14 384.20 H659.36 M657.20 387.70 H659.24 L658.13 389.24 Q659.36 389.24 659.36 390.29 Q659.36 391.40 658.25 391.40 Q657.51 391.40 657.14 390.91 M744.11 380.42 Q742.14 380.67 742.14 382.77 Q742.14 384.00 743.25 384.00 Q744.36 384.00 744.36 382.89 Q744.36 381.90 743.25 381.90 Q742.45 381.90 742.14 382.52 M744.24 394.80 H742.39 L742.20 396.59 Q742.63 396.28 743.25 396.28 Q744.36 396.28 744.36 397.39 Q744.36 398.50 743.25 398.50 Q742.51 398.50 742.14 398.01 M779.14 387.60 H781.36 L780.00 391.30 " fill="none" stroke="#9a1010" stroke-width="0.95" stroke-linecap="round" stroke-linejoin="round"/>
<path transform="translate(684.3,385.5) rotate(-90) scale(0.6)" d="M2 2.7Q0.3 2.7 0.3 1.35Q0.3 0 2 0Q3.7 0 3.7 1.35Q3.7 2.7 2 2.7Q0.2 2.7 0.2 4.35Q0.2 6 2 6Q3.8 6 3.8 4.35Q3.8 2.7 2 2.7" fill="none" stroke="#9a1010" stroke-width="1.5"/>
<path transform="translate(684.3,418.5) rotate(-90) scale(0.6)" d="M2.8 6V0L0.2 4.2H3.8" fill="none" stroke="#9a1010" stroke-width="1.5"/>
<text transform="translate(691,393.5) rotate(-90)" font-size="5.5" text-anchor="middle" font-family="Liberation Sans" fill="#007a7a">V+</text>
<text transform="translate(691,408) rotate(-90)" font-size="5.5" text-anchor="middle" font-family="Liberation Sans" fill="#007a7a">V-</text>
<text x="652" y="300" font-size="5.49" textLength="6.4" lengthAdjust="spacingAndGlyphs" font-family="Liberation Sans" font-weight="bold" fill="#007a7a" style="white-space:pre">J1</text>
<text x="639.3" y="306.3" font-size="6.04" textLength="31.7" lengthAdjust="spacingAndGlyphs" font-family="Liberation Sans" font-weight="bold" fill="#007a7a" style="white-space:pre">Conn_01x02</text>
<text x="696.7" y="300" font-size="5.49" textLength="6.3" lengthAdjust="spacingAndGlyphs" font-family="Liberation Sans" font-weight="bold" fill="#007a7a" style="white-space:pre">R2</text>
<text x="695" y="306.8" font-size="5.49" textLength="10.0" lengthAdjust="spacingAndGlyphs" font-family="Liberation Sans" font-weight="bold" fill="#007a7a" style="white-space:pre">100</text>
<text x="659" y="346" font-size="6.17" textLength="11.0" lengthAdjust="spacingAndGlyphs" font-family="Liberation Sans" font-weight="bold" fill="#007a7a" style="white-space:pre">GND</text>
<text x="758" y="278.8" font-size="6.04" textLength="6.7" lengthAdjust="spacingAndGlyphs" font-family="Liberation Sans" font-weight="bold" fill="#007a7a" style="white-space:pre">R1</text>
<text x="756.4" y="285.4" font-size="6.04" textLength="10.5" lengthAdjust="spacingAndGlyphs" font-family="Liberation Sans" font-weight="bold" fill="#007a7a" style="white-space:pre">200</text>
<text x="753.6" y="340" font-size="5.49" textLength="16.0" lengthAdjust="spacingAndGlyphs" font-family="Liberation Sans" font-weight="bold" fill="#007a7a" style="white-space:pre">TL082</text>
<text x="756.4" y="347.2" font-size="6.04" textLength="10.5" lengthAdjust="spacingAndGlyphs" font-family="Liberation Sans" font-weight="bold" fill="#007a7a" style="white-space:pre">U1A</text>
<text x="731" y="346" font-size="5.90" textLength="11.0" lengthAdjust="spacingAndGlyphs" font-family="Liberation Sans" font-weight="bold" fill="#007a7a" style="white-space:pre">GND</text>
<text x="792.8" y="346" font-size="5.90" textLength="10.5" lengthAdjust="spacingAndGlyphs" font-family="Liberation Sans" font-weight="bold" fill="#007a7a" style="white-space:pre">GND</text>
<text x="821.5" y="323" font-size="6.17" textLength="6.0" lengthAdjust="spacingAndGlyphs" font-family="Liberation Sans" font-weight="bold" fill="#007a7a" style="white-space:pre">J2</text>
<text x="821.5" y="330" font-size="5.90" textLength="33.1" lengthAdjust="spacingAndGlyphs" font-family="Liberation Sans" font-weight="bold" fill="#007a7a" style="white-space:pre">Conn_01x02</text>
<text x="652.1" y="364.4" font-size="5.21" textLength="6.6" lengthAdjust="spacingAndGlyphs" font-family="Liberation Sans" font-weight="bold" fill="#007a7a" style="white-space:pre">J3</text>
<text x="639" y="371.3" font-size="5.35" textLength="32.2" lengthAdjust="spacingAndGlyphs" font-family="Liberation Sans" font-weight="bold" fill="#007a7a" style="white-space:pre">Conn_01x03</text>
<text x="625.5" y="418" font-size="5.90" textLength="26.4" lengthAdjust="spacingAndGlyphs" font-family="Liberation Sans" font-weight="bold" fill="#007a7a" style="white-space:pre">PWR_FLAG</text>
<text x="658.7" y="418" font-size="5.90" textLength="11.2" lengthAdjust="spacingAndGlyphs" font-family="Liberation Sans" font-weight="bold" fill="#007a7a" style="white-space:pre">GND</text>
<text x="683.2" y="360.9" font-size="5.90" textLength="14.6" lengthAdjust="spacingAndGlyphs" font-family="Liberation Sans" font-weight="bold" fill="#007a7a" style="white-space:pre">+12V</text>
<text x="701.5" y="360.9" font-size="5.90" textLength="26.5" lengthAdjust="spacingAndGlyphs" font-family="Liberation Sans" font-weight="bold" fill="#007a7a" style="white-space:pre">PWR_FLAG</text>
<text x="683.2" y="442.6" font-size="5.35" textLength="14.6" lengthAdjust="spacingAndGlyphs" font-family="Liberation Sans" font-weight="bold" fill="#007a7a" style="white-space:pre">-12V</text>
<text x="701.5" y="442.6" font-size="5.35" textLength="26.5" lengthAdjust="spacingAndGlyphs" font-family="Liberation Sans" font-weight="bold" fill="#007a7a" style="white-space:pre">PWR_FLAG</text>
<text x="693.8" y="398.7" font-size="5.90" textLength="10.3" lengthAdjust="spacingAndGlyphs" font-family="Liberation Sans" font-weight="bold" fill="#007a7a" style="white-space:pre">U1C</text>
<text x="693.8" y="405.6" font-size="6.31" textLength="16.0" lengthAdjust="spacingAndGlyphs" font-family="Liberation Sans" font-weight="bold" fill="#007a7a" style="white-space:pre">TL082</text>
<text x="731" y="418.3" font-size="6.45" textLength="11.0" lengthAdjust="spacingAndGlyphs" font-family="Liberation Sans" font-weight="bold" fill="#007a7a" style="white-space:pre">GND</text>
<text x="753.4" y="414.5" font-size="5.90" textLength="16.3" lengthAdjust="spacingAndGlyphs" font-family="Liberation Sans" font-weight="bold" fill="#007a7a" style="white-space:pre">TL082</text>
<text x="756.9" y="420.9" font-size="5.35" textLength="9.8" lengthAdjust="spacingAndGlyphs" font-family="Liberation Sans" font-weight="bold" fill="#007a7a" style="white-space:pre">U1B</text><path d="M1332.5 154V218M1301 186.5H1365" stroke="#444" stroke-width="1.2"/>
</svg>
<g>
<rect x="2.5" y="4.5" width="16.5" height="17.5" rx="1.5" fill="#f4f4f4" stroke="#e0e0e0" stroke-width="1"/>
<path d="M10.5 6V21.5M3.5 11.8H15M4 17H10" stroke="#22a022" stroke-width="1"/>
<rect x="14" y="10.3" width="5" height="3" rx="1" fill="#fff" stroke="#c02020" stroke-width="1"/>
<path d="M11.8 13.5L8 16.5L11.8 20" fill="none" stroke="#c02020" stroke-width="1.4"/>
<rect x="9.5" y="5" width="2" height="3" fill="#c02020"/>
<path d="M5 10.5H8M12.5 17.5H15" stroke="#666" stroke-width="0.8"/>
</g>
<path d="M1388.5 13.5H1401" stroke="#111" stroke-width="1"/>
<path d="M1443.5 10.5H1451.5V18.5H1443.5ZM1445.5 10.5V8.5Q1445.5 7.5 1446.5 7.5H1453.5Q1454.5 7.5 1454.5 8.5V15.5Q1454.5 16.5 1453.5 16.5H1451.5" fill="none" stroke="#111" stroke-width="1"/>
<path d="M1500.5 7L1512.5 19M1512.5 7L1500.5 19" stroke="#111" stroke-width="1"/>

<g id="seps" fill="#c6c6c6">
<rect x="50" y="58" width="1" height="26"/><rect x="108" y="58" width="1" height="26"/><rect x="203" y="58" width="1" height="26"/>
<rect x="261" y="58" width="1" height="26"/><rect x="356" y="58" width="1" height="26"/><rect x="451" y="58" width="1" height="26"/>
<rect x="660" y="58" width="1" height="26"/><rect x="754" y="58" width="1" height="26"/><rect x="887" y="58" width="1" height="26"/>
<rect x="1133" y="58" width="1" height="26"/>
</g>
<!-- save (disabled) -->
<g>
<path d="M9 75L13 66H31L35 75Z" fill="#ececec" stroke="#d4d4d4" stroke-width="1.2"/>
<rect x="8" y="75" width="28" height="10" rx="1.5" fill="#f6f6f6" stroke="#d0d0d0" stroke-width="1.2"/>
<circle cx="31" cy="80" r="1.2" fill="#9be08a"/>
<path d="M23 56H32V63H35.8L27.4 72.8L19 63H23Z" fill="#b8e296" stroke="#a4cf84" stroke-width="1"/>
</g>
<!-- page settings -->
<g>
<path d="M65.5 56.5H84.5L93.5 65.5V85.5H65.5Z" fill="#f4f4f4" stroke="#7a7a7a" stroke-width="1.2"/>
<path d="M84.5 56.5V65.5H93.5" fill="#e8e8e8" stroke="#b0b0b0" stroke-width="1"/>
<path d="M74 59V83M67 73.4H91" stroke="#404040" stroke-width="1.4"/>
<path d="M71.5 61.5L74 57.5L76.5 61.5ZM71.5 79.5L74 83.5L76.5 79.5ZM70 71L66 73.4L70 75.8ZM88 71L92 73.4L88 75.8Z" fill="#404040"/>
<rect x="79.5" y="78.5" width="13.5" height="7" fill="#f4f4f4" stroke="#8a2a2a" stroke-width="1"/>
<path d="M81 81H85M86 81H91M81 83.5H91" stroke="#333" stroke-width="1.3"/>
</g>
<!-- print -->
<g>
<path d="M125.5 56H143L148.5 61.5V70H125.5Z" fill="#fafafa" stroke="#555" stroke-width="1.2"/>
<rect x="121.5" y="68.5" width="30" height="16" rx="3" fill="#d8d8d8" stroke="#3a3a3a" stroke-width="1.3"/>
<rect x="124" y="69.5" width="25" height="6" fill="#3a3a3a"/>
<rect x="124" y="80" width="25" height="2" fill="#a0a0a0"/>
<circle cx="148" cy="77" r="1.2" fill="#3c3"/>
</g>
<!-- plot -->
<g>
<rect x="160.5" y="57.5" width="28.5" height="9.5" rx="2.5" fill="#e6e6e6" stroke="#3c3c3c" stroke-width="1.6"/>
<rect x="163" y="61.5" width="22" height="2" fill="#111"/>
<circle cx="184.5" cy="60.5" r="1.3" fill="#2c2"/>
<path d="M163.5 67V83M184.2 67V83" stroke="#3c3c3c" stroke-width="3"/>
<path d="M160 83.5H168M180 83.5H188.5" stroke="#3c3c3c" stroke-width="2"/>
<path d="M167.5 64H181.5V79.5H172L167.5 75Z" fill="#f6f6f6" stroke="#9a9a9a" stroke-width="1"/>
</g>
<!-- paste (disabled) -->
<g>
<rect x="218" y="60" width="23.5" height="24" rx="2" fill="#f2dfc4" stroke="#dcc7aa" stroke-width="1"/>
<rect x="224" y="56" width="11.5" height="6.5" rx="1.5" fill="#cfcfcf" stroke="#bdbdbd" stroke-width="1"/>
<rect x="228.5" y="68.5" width="16.5" height="16.5" fill="#fdfdfd" stroke="#dadada" stroke-width="1"/>
<path d="M231 72H243M231 75H243M231 78H243M231 81H238" stroke="#d8d8d8" stroke-width="1"/>
</g>
<!-- undo (disabled) -->
<path d="M276.5 66L287 57.3V62.5C297 62.5 302 68 299.5 76C298 80 295 82.5 292 82.8C295.5 79 295 71 287 70V75Z" fill="#f6e88e" stroke="#e8d878" stroke-width="0.8"/>
<!-- redo (disabled) -->
<path d="M340.8 66L330.3 57.3V62.5C320.3 62.5 315.3 68 317.8 76C319.3 80 322.3 82.5 325.3 82.8C321.8 79 322.3 71 330.3 70V75Z" fill="#c8f0a2" stroke="#b6e08e" stroke-width="0.8"/>
<!-- find -->
<g>
<path d="M370.5 56H393L400 63V85.5H370.5Z" fill="#f4f4f4" stroke="#8c8c8c" stroke-width="1.2"/>
<path d="M374 60H390M374 64H396M374 68H396M374 72H396M374 76H396M374 80H396" stroke="#c8c8c8" stroke-width="1"/>
<circle cx="382.3" cy="70.3" r="7.8" fill="#c9d6ee" stroke="#3a3a3a" stroke-width="2"/>
<path d="M377 68H388M377 71H388M377 74H388" stroke="#8a9ab8" stroke-width="1"/>
<path d="M388.5 76.5L397 85" stroke="#111" stroke-width="3.5" stroke-linecap="round"/>
</g>
<!-- find replace -->
<g>
<path d="M407.5 56H430L437.5 63.5V85.5H407.5Z" fill="#f4f4f4" stroke="#8c8c8c" stroke-width="1.2"/>
<path d="M411 60H427M411 64H433M411 68H433M411 72H433M411 76H433M411 80H433" stroke="#c8c8c8" stroke-width="1"/>
<path d="M415 70A7 7 0 0 1 428.5 67" fill="none" stroke="#505050" stroke-width="2.6"/>
<path d="M425 65.5L431 64.5L429.5 70Z" fill="#505050"/>
<path d="M429 72.5A7 7 0 0 1 415.5 76" fill="none" stroke="#505050" stroke-width="2.6"/>
<path d="M419 77.5L413 78.5L414.5 73Z" fill="#505050"/>
</g>
<!-- redraw -->
<g>
<path d="M487.5 66A9 9 0 1 0 484 79.5" fill="none" stroke="#3a3a3a" stroke-width="2.2"/>
<path d="M485 68H492L488.5 77.5Z" fill="#3a3a3a"/>
</g>
<!-- zoom in/out/fit/sel -->
<g stroke="#3c3c3c" fill="none">
<circle cx="517.7" cy="70.2" r="9" stroke-width="2.2"/>
<circle cx="555.3" cy="70.2" r="9" stroke-width="2.2"/>
<circle cx="592.9" cy="70.2" r="9" stroke-width="2.2"/>
<path d="M512.5 70.2H523M517.7 65V75.5M550 70.2H560.5" stroke-width="2.8"/>
<rect x="588" y="65.3" width="9.8" height="9.8" stroke-width="1.6" fill="#d0d0d0"/>
<path d="M524.5 77L531.5 84M562 77L569 84M599.5 77L606.5 84M637.5 77L644.5 84" stroke="#222" stroke-width="3.6" stroke-linecap="round"/>
</g>
<rect x="628.5" y="55.5" width="17.5" height="17" fill="#d0d0d0" stroke="#333" stroke-width="1.2" stroke-dasharray="2.5 1.5"/>
<circle cx="630.8" cy="70.5" r="9" fill="none" stroke="#3c3c3c" stroke-width="2.2"/>
<!-- hierarchy -->
<g fill="#fff" stroke="#5a5a5a" stroke-width="1.8">
<path d="M676.5 63.5V82.5H681.7M676.5 71.7H681.7" fill="none" stroke-width="1.4"/>
<rect x="674.2" y="56.7" width="28.5" height="6.8" rx="1.5"/>
<rect x="681.7" y="68.7" width="21" height="6" rx="1.5"/>
<rect x="681.7" y="79.2" width="21" height="6.6" rx="1.5"/>
</g>
<!-- leave sheet (disabled) -->
<g fill="#fbfbfb" stroke="#dedede" stroke-width="1.6">
<path d="M714 63.5V82.5H719.2" fill="none" stroke-width="1.2"/>
<rect x="711.7" y="56.7" width="28" height="6.8" rx="1.5"/>
<rect x="719.2" y="68.7" width="20.5" height="6" rx="1.5"/>
<rect x="719.2" y="79.2" width="20.5" height="6.6" rx="1.5"/>
</g>
<path d="M715.5 62V71.5H728" fill="none" stroke="#f0a2a2" stroke-width="2"/>
<path d="M712 64L715.5 58.5L719 64Z" fill="#f0a2a2"/>
<circle cx="729" cy="71.5" r="2.3" fill="#f0a2a2"/>
<!-- symbol editor -->
<g>
<path d="M770 65H775.3M770 76.2H775.3M792.5 70.5H796.3" stroke="#b01c1c" stroke-width="1.8"/>
<path d="M775.8 59L792.5 70.5L775.8 82.2Z" fill="#f5e2b8" stroke="#b01c1c" stroke-width="1.8"/>
<path d="M778 65H781" stroke="#b01c1c" stroke-width="1.2"/>
<circle cx="779.5" cy="76" r="1.2" fill="#b01c1c"/>
</g>
<!-- library browser -->
<g>
<rect x="808.2" y="58.2" width="6" height="24.8" fill="#e01a1a"/>
<rect x="814.2" y="58.2" width="7.5" height="24.8" fill="#19b019"/>
<path d="M821.7 61L828 58.5L834 82L827.5 83Z" fill="#3a78d8"/>
<circle cx="819" cy="69.5" r="6.5" fill="#d8e8d8" fill-opacity="0.7" stroke="#333" stroke-width="2"/>
<path d="M823.5 74.5L831.5 83" stroke="#111" stroke-width="3" stroke-linecap="round"/>
<circle cx="810.5" cy="79.5" r="1" fill="#fff"/>
</g>
<!-- footprint editor -->
<g>
<path d="M844.5 62.5H872.3V78.3H844.5V72.5A2.5 2.5 0 0 0 844.5 68Z" fill="#e2e2e2" stroke="#7a7a7a" stroke-width="1.2"/>
<g fill="#10c010" stroke="#0a8a0a" stroke-width="0.8">
<rect x="847.8" y="57.5" width="5" height="6.5" rx="1"/><rect x="856" y="57.5" width="5" height="6.5" rx="1"/><rect x="864.6" y="57.5" width="5" height="6.5" rx="1"/>
<rect x="847.8" y="77" width="5" height="6.7" rx="1"/><rect x="856" y="77" width="5" height="6.7" rx="1"/><rect x="864.6" y="77" width="5" height="6.7" rx="1"/>
</g>
</g>
<!-- annotate -->
<g>
<rect x="903.5" y="56.5" width="24.5" height="28" fill="#fff" stroke="#7c7c7c" stroke-width="1.6"/>
<path d="M907 60.5H921M907 64H919M907 67.5H916M907 71H911" stroke="#8c8c8c" stroke-width="1"/>
<path d="M908 82.5H924" stroke="#f02020" stroke-width="1.8"/>
<path d="M912 80.5L929 62L932 65L914.5 83.5L910 84Z" fill="#fafafa" stroke="#3c3c3c" stroke-width="1.4" stroke-linejoin="round"/>
<path d="M912.3 80L915 83" stroke="#3c3c3c" stroke-width="1"/>
</g>
<!-- ERC ladybug -->
<g>
<path d="M947 63L945 56M961 63L963 56M944 70L940 69M964 70L968 69M944 78L940 80M964 78L968 80M947 83L944 85M961 83L964 85" stroke="#9a9a9a" stroke-width="1.2"/>
<ellipse cx="954" cy="75.5" rx="9.5" ry="9.8" fill="#d42a2a" stroke="#7a1010" stroke-width="0.6"/>
<path d="M946 63.5Q954 59 962 63.5L961 67Q954 65 947 67Z" fill="#222"/>
<circle cx="949" cy="63.5" r="1.2" fill="#e8d030"/><circle cx="959" cy="63.5" r="1.2" fill="#e8d030"/>
<path d="M954 66V85" stroke="#6a1010" stroke-width="0.6"/>
<circle cx="950" cy="73" r="1.7" fill="#2a1010"/><circle cx="958" cy="73" r="1.7" fill="#2a1010"/>
<circle cx="949" cy="79" r="1.7" fill="#2a1010"/><circle cx="959" cy="79" r="1.7" fill="#2a1010"/>
<circle cx="954" cy="69" r="1.5" fill="#2a1010"/>
</g>
<!-- cvpcb -->
<g>
<rect x="976.5" y="55.2" width="19.8" height="19.3" rx="1.5" fill="#ececec" stroke="#cfcfcf" stroke-width="1"/>
<path d="M981 59.5L991 65L981 70.5Z" fill="#f6e4c4" stroke="#d47a7a" stroke-width="1.2"/>
<path d="M978.5 62H981M978.5 68H981" stroke="#d47a7a" stroke-width="1.2"/>
<rect x="986.9" y="66.1" width="19.2" height="19.3" rx="1.5" fill="#f0f0f0" stroke="#c4c4c4" stroke-width="1"/>
<rect x="989.5" y="71.5" width="14" height="9" fill="#e0e0e0" stroke="#999" stroke-width="0.8"/>
<g fill="#22b022"><rect x="990.5" y="69.5" width="2.5" height="3.5"/><rect x="994.5" y="69.5" width="2.5" height="3.5"/><rect x="998.5" y="69.5" width="2.5" height="3.5"/>
<rect x="990.5" y="79" width="2.5" height="3.5"/><rect x="994.5" y="79" width="2.5" height="3.5"/><rect x="998.5" y="79" width="2.5" height="3.5"/></g>
</g>
<!-- netlist -->
<g>
<rect x="1015.5" y="55.7" width="27" height="29.2" fill="#eeeeee" stroke="#a8a8a8" stroke-width="1"/>
<path d="M1019 59L1028.4 66.4L1039.7 59M1020 69L1028.4 66.4L1036.7 69.8" stroke="#555" stroke-width="0.9" fill="none"/>
<g fill="#1a8a1a"><circle cx="1019" cy="59" r="1.5"/><circle cx="1039.7" cy="59" r="1.5"/><circle cx="1020" cy="69" r="1.5"/><circle cx="1036.7" cy="69.8" r="1.5"/><circle cx="1028.4" cy="66.4" r="1.5"/></g>
<rect x="1017" y="72.7" width="24" height="11.2" fill="#1a7a1a"/>
<text x="1019" y="82.6" font-size="11" font-weight="bold" font-family="Liberation Sans" fill="#fff" textLength="20" lengthAdjust="spacingAndGlyphs">NET</text>
</g>
<!-- bom grid -->
<g>
<rect x="1052" y="56.4" width="28.7" height="28.2" fill="#808080"/>
<rect x="1053.2" y="57.6" width="3.9" height="3.8" fill="#5b9cf0"/><rect x="1058.9" y="57.6" width="3.9" height="3.8" fill="#5b9cf0"/><rect x="1064.7" y="57.6" width="3.9" height="3.8" fill="#5b9cf0"/><rect x="1070.4" y="57.6" width="3.9" height="3.8" fill="#5b9cf0"/><rect x="1076.2" y="57.6" width="3.9" height="3.8" fill="#5b9cf0"/><rect x="1053.2" y="63.2" width="3.9" height="3.8" fill="#5b9cf0"/><rect x="1058.9" y="63.2" width="3.9" height="3.8" fill="#ffffff"/><rect x="1064.7" y="63.2" width="3.9" height="3.8" fill="#ffffff"/><rect x="1070.4" y="63.2" width="3.9" height="3.8" fill="#ffffff"/><rect x="1076.2" y="63.2" width="3.9" height="3.8" fill="#ffffff"/><rect x="1053.2" y="68.9" width="3.9" height="3.8" fill="#5b9cf0"/><rect x="1058.9" y="68.9" width="3.9" height="3.8" fill="#ffffff"/><rect x="1064.7" y="68.9" width="3.9" height="3.8" fill="#ffffff"/><rect x="1070.4" y="68.9" width="3.9" height="3.8" fill="#ffffff"/><rect x="1076.2" y="68.9" width="3.9" height="3.8" fill="#ffffff"/><rect x="1053.2" y="74.5" width="3.9" height="3.8" fill="#5b9cf0"/><rect x="1058.9" y="74.5" width="3.9" height="3.8" fill="#ffffff"/><rect x="1064.7" y="74.5" width="3.9" height="3.8" fill="#ffffff"/><rect x="1070.4" y="74.5" width="3.9" height="3.8" fill="#ffffff"/><rect x="1076.2" y="74.5" width="3.9" height="3.8" fill="#ffffff"/><rect x="1053.2" y="80.2" width="3.9" height="3.8" fill="#5b9cf0"/><rect x="1058.9" y="80.2" width="3.9" height="3.8" fill="#ffffff"/><rect x="1064.7" y="80.2" width="3.9" height="3.8" fill="#ffffff"/><rect x="1070.4" y="80.2" width="3.9" height="3.8" fill="#ffffff"/><rect x="1076.2" y="80.2" width="3.9" height="3.8" fill="#ffffff"/>
</g>
<!-- BOM -->
<g>
<rect x="1092.5" y="55.3" width="23.4" height="16.8" fill="#fafafa" stroke="#8e8e8e" stroke-width="1.6"/>
<rect x="1095" y="58" width="18.4" height="13" fill="#fff" stroke="#b0b0b0" stroke-width="0.8"/>
<text x="1104.2" y="69.5" font-size="11" font-family="Liberation Sans" fill="#333" text-anchor="middle">$</text>
<rect x="1090.5" y="71.5" width="27.4" height="12.8" fill="#5b9cf0" stroke="#6a6a6a" stroke-width="1.2"/>
<text x="1093" y="81.5" font-size="9.5" font-family="Liberation Sans" fill="#fff" textLength="22.5" lengthAdjust="spacingAndGlyphs">BOM</text>
<path d="M1093 82.7H1103" stroke="#dfe" stroke-width="0.8"/>
</g>
<!-- pcbnew -->
<g>
<rect x="1146.4" y="55.3" width="31" height="30.4" fill="#e2c48a"/>
<path d="M1149 56V85M1153.5 56V74.5L1158 79V85M1158 56V70L1162.5 74.5V85M1163 56V61.5L1166.5 65H1177" stroke="#0a6a0a" stroke-width="2.6" fill="none"/>
<rect x="1166.5" y="55.3" width="10.9" height="7" fill="#0a6a0a"/>
<rect x="1163.5" y="69" width="13.9" height="16.7" fill="#0a6a0a"/>
<circle cx="1174" cy="66" r="1.6" fill="#d8e8d8" stroke="#0a6a0a" stroke-width="1"/>
<circle cx="1150" cy="75" r="1.6" fill="#d8e8d8" stroke="#0a6a0a" stroke-width="1"/>
</g>
<!-- back annotate -->
<g>
<path d="M1189.7 55.5H1208L1214.5 60V76H1189.7Z" fill="#f8f8f8" stroke="#cfcfcf" stroke-width="1"/>
<path d="M1200.5 64.3L1206.5 58.8V61.5H1214V67H1206.5V69.8Z" fill="#00e8f0" stroke="#2a6a6a" stroke-width="1"/>
<text x="1184" y="85.7" font-size="11" font-weight="bold" font-family="Liberation Sans" fill="#555" textLength="30" lengthAdjust="spacingAndGlyphs">BACK</text>
</g>

<rect x="38.5" y="90" width="1" height="658" fill="#fafafa"/>
<g fill="#b9d9f5" stroke="#5ea6e8" stroke-width="1.6">
<rect x="2.3" y="94.8" width="35" height="35.2" rx="2"/>
<rect x="2.3" y="170.3" width="35" height="34.8" rx="2"/>
<rect x="2.3" y="283.3" width="35" height="34.6" rx="2"/>
</g>
<g fill="#333">
<circle cx="8.6" cy="101.3" r="1.9"/><circle cx="15.8" cy="101.3" r="1.9"/><circle cx="23" cy="101.3" r="1.9"/><circle cx="30.2" cy="101.3" r="1.9"/>
<circle cx="8.6" cy="108.5" r="1.9"/><circle cx="15.8" cy="108.5" r="1.9"/><circle cx="23" cy="108.5" r="1.9"/><circle cx="30.2" cy="108.5" r="1.9"/>
<circle cx="8.6" cy="115.7" r="1.9"/><circle cx="15.8" cy="115.7" r="1.9"/><circle cx="23" cy="115.7" r="1.9"/><circle cx="30.2" cy="115.7" r="1.9"/>
<circle cx="8.6" cy="122.9" r="1.9"/><circle cx="15.8" cy="122.9" r="1.9"/><circle cx="23" cy="122.9" r="1.9"/><circle cx="30.2" cy="122.9" r="1.9"/>
</g>
<text x="12.2" y="151" font-size="18" font-family="Liberation Sans" fill="#222" textLength="15" lengthAdjust="spacingAndGlyphs">in</text>
<path d="M8 156.4H30.5M5.5 189.8" stroke="#333" stroke-width="1.5"/>
<path d="M5 156.4L10 153.5V159.3ZM33.8 156.4L28.8 153.5V159.3Z" fill="#333"/>
<text x="5.5" y="188.4" font-size="17" font-family="Liberation Sans" fill="#222" textLength="27.5" lengthAdjust="spacingAndGlyphs">mm</text>
<path d="M8 193.9H30.5" stroke="#333" stroke-width="1.5"/>
<path d="M5 193.9L10 191V196.8ZM33.8 193.9L28.8 191V196.8Z" fill="#333"/>
<!-- cursor tool -->
<path d="M5 219.7H34M14.3 211V239.6" stroke="#9a9a9a" stroke-width="2.2"/>
<path d="M8 219.7H20M14.3 213V226" stroke="#3a3a3a" stroke-width="2.2"/>
<path d="M18.8 224.5V237L21.8 234L24.5 240L27 239L24.3 233H28.5Z" fill="#f4f4f4" stroke="#555" stroke-width="1.1" stroke-linejoin="round"/>
<!-- hierarchical opamp -->
<path d="M22.8 250V274.5" stroke="#9a9a9a" stroke-width="1.4"/>
<circle cx="22.8" cy="249" r="1.8" fill="#f8f8f8" stroke="#9a9a9a" stroke-width="1"/>
<circle cx="22.8" cy="275.5" r="1.8" fill="#f8f8f8" stroke="#9a9a9a" stroke-width="1"/>
<path d="M6 256.8H11M6 268.2H11M27.9 262.4H32.4" stroke="#b82020" stroke-width="1.8"/>
<path d="M11.2 251.3L27.9 262.4L11.2 274.1Z" fill="#f5e2b8" stroke="#b82020" stroke-width="1.8"/>
<path d="M13.5 257H17" stroke="#b82020" stroke-width="1.2"/>
<circle cx="15.2" cy="265.5" r="1.2" fill="#b82020"/>
<!-- orthogonal -->
<path d="M13.5 286.6V313.8M5.6 306.2H33.5" stroke="#333" stroke-width="2"/>
<path d="M13.5 300H21V306" fill="none" stroke="#444" stroke-width="1.2"/>

<rect x="1498.8" y="94.8" width="35.2" height="35" rx="2" fill="#b9d9f5" stroke="#5ea6e8" stroke-width="1.6"/>
<path d="M1508 99.5V121.5L1512.8 117L1516.5 125.5L1520.5 123.8L1516.8 115.5H1523.5Z" fill="#f2f2f2" stroke="#5a5a5a" stroke-width="1.6" stroke-linejoin="round"/>
<!-- highlight net -->
<path d="M1502 139.5H1508V153.5H1520.5M1502 147H1520.5" stroke="#b8b8b8" stroke-width="2.4" fill="none"/>
<path d="M1523.5 135V163.5" stroke="#b8b8b8" stroke-width="2.4"/>
<path d="M1502 160.6H1516.5V143H1530.6" stroke="#f020f0" stroke-width="2.4" fill="none"/>
<!-- place symbol -->
<path d="M1503 181.2H1508M1503 192.4H1508M1525.3 187H1530" stroke="#b82020" stroke-width="1.6"/>
<path d="M1508 175.3L1525.3 187L1508 198.8Z" fill="#f5e2b8" stroke="#b82020" stroke-width="1.6"/>
<path d="M1510.5 181.5H1514" stroke="#b82020" stroke-width="1.1"/>
<circle cx="1512.2" cy="191" r="1.1" fill="#b82020"/>
<!-- ground -->
<path d="M1516 213V225.3M1506 225.3H1527M1509.6 230.8H1522.4M1513 236H1519.5" stroke="#840000" stroke-width="2"/>
<!-- wire -->
<path d="M1505.3 273.3L1527.3 251.8" stroke="#008400" stroke-width="2.6" stroke-linecap="round"/>
<!-- bus -->
<path d="M1505.7 309.6L1527.3 290" stroke="#0000c8" stroke-width="3.6" stroke-linecap="round"/>
<!-- wire entry -->
<path d="M1528.2 322.4V352.7" stroke="#a0a0a0" stroke-width="3.4"/>
<path d="M1502 325.9H1515M1502 335.7H1515" stroke="#a8a8a8" stroke-width="2.6"/>
<path d="M1515 326L1529 336M1515 336L1529 346" stroke="#008400" stroke-width="2.2" stroke-linecap="round"/>
<!-- bus entry -->
<path d="M1528.2 360.6V391" stroke="#a0a0a0" stroke-width="3.4"/>
<path d="M1502 364H1515M1502 375.3H1515" stroke="#a8a8a8" stroke-width="3"/>
<path d="M1515.5 364.5L1529 374.5M1515.5 375.5L1529 385.5" stroke="#0000c8" stroke-width="3.4" stroke-linecap="round"/>
<!-- no connect -->
<path d="M1509.6 405.7L1524.9 420.4M1524.9 405.7L1509.6 420.4" stroke="#0000d0" stroke-width="2.2"/>
<!-- junction -->
<path d="M1502 450.4H1520M1520.4 436V464.5" stroke="#b4b4b4" stroke-width="2.4"/>
<circle cx="1520.4" cy="450.4" r="5.4" fill="#008400"/>
<!-- label -->
<text x="1507.8" y="493" font-size="22" font-family="Liberation Sans" fill="#111" textLength="17" lengthAdjust="spacingAndGlyphs">A</text>
<path d="M1502.5 497.8H1530" stroke="#20a020" stroke-width="3" stroke-linecap="round"/>
<!-- global label -->
<path d="M1502.8 518H1519L1525.7 527L1519 536H1502.8Z" fill="#fafafa" stroke="#b02828" stroke-width="1.6"/>
<path d="M1525.7 527H1530" stroke="#20a020" stroke-width="2"/>
<text x="1505.5" y="533.5" font-size="17" font-family="Liberation Sans" fill="#111" textLength="12" lengthAdjust="spacingAndGlyphs">A</text>
<!-- hier label -->
<path d="M1501.5 549H1531.5V572L1526 578.2H1501.5Z" fill="#f4f4f4" stroke="#a8a8a8" stroke-width="1"/>
<path d="M1526 578.2V572.5H1531.5" fill="#e0e0e0" stroke="#a8a8a8" stroke-width="0.8"/>
<text x="1502.5" y="571" font-size="17" font-family="Liberation Sans" fill="#222" textLength="12" lengthAdjust="spacingAndGlyphs">A</text>
<path d="M1516 555H1522.5L1527.5 563L1522.5 571H1516Z" fill="none" stroke="#c49a10" stroke-width="1.8"/>
<path d="M1527.5 563H1531" stroke="#20a020" stroke-width="1.6"/>
<!-- hier sheet -->
<rect x="1502.2" y="587.2" width="20" height="20.5" fill="#f4f4f4" stroke="#b8b8b8" stroke-width="1"/>
<rect x="1504.3" y="589" width="20" height="22" fill="#f2f2f2" stroke="#c0c0c0" stroke-width="1"/>
<rect x="1506.3" y="590.8" width="24.8" height="24.6" rx="1" fill="#fafafa" stroke="#6a6a6a" stroke-width="1.3"/>
<path d="M1517.8 596V607.5M1518 600.5H1521M1507 608H1512.5M1518 607.5V614" stroke="#8ed08e" stroke-width="1.4" fill="none"/>
<rect x="1516.2" y="592" width="3.2" height="4" rx="1" fill="none" stroke="#d46a6a" stroke-width="1.2"/>
<rect x="1521.3" y="599.2" width="8" height="2.8" rx="1.2" fill="none" stroke="#d46a6a" stroke-width="1.2"/>
<path d="M1517.5 605L1513 608L1517.5 612" fill="none" stroke="#d46a6a" stroke-width="1.6"/>
<path d="M1509.5 597H1513M1509.5 598.5H1513M1520 606H1524M1520 607.5H1524" stroke="#999" stroke-width="0.6"/>
<!-- import sheet pin -->
<rect x="1501.8" y="624" width="22" height="24" fill="#f0f0f0" stroke="#b0b0b0" stroke-width="1"/>
<rect x="1504" y="626.5" width="24" height="25" fill="#f4f4f4" stroke="#b0b0b0" stroke-width="1"/>
<path d="M1506.5 629.5H1531.5V648L1526.5 653.8H1506.5Z" fill="#fafafa" stroke="#a0a0a0" stroke-width="1"/>
<text x="1507" y="648.5" font-size="15" font-family="Liberation Sans" fill="#222" textLength="10.5" lengthAdjust="spacingAndGlyphs">A</text>
<path d="M1519 635H1524L1528.5 641.5L1524 648H1519Z" fill="none" stroke="#c49a10" stroke-width="1.6"/>
<path d="M1518.5 630.5L1524 625V628H1531.5V633H1524V636Z" fill="#00e8f0" stroke="#2a6a6a" stroke-width="1"/>
<!-- sheet pin -->
<path d="M1501.5 661.5H1531.5V685L1526 691H1501.5Z" fill="#f4f4f4" stroke="#a8a8a8" stroke-width="1"/>
<path d="M1526 691V685.5H1531.5" fill="#e0e0e0" stroke="#a8a8a8" stroke-width="0.8"/>
<path d="M1503.5 668H1509.5L1514 676L1509.5 684H1503.5Z" fill="none" stroke="#c49a10" stroke-width="1.8"/>
<text x="1515.5" y="684" font-size="17" font-family="Liberation Sans" fill="#222" textLength="13" lengthAdjust="spacingAndGlyphs">A</text>
<!-- dashed rect -->
<rect x="1505.5" y="704" width="22" height="20.5" fill="none" stroke="#0000d0" stroke-width="2.6" stroke-dasharray="4 2.6"/>

<text x="25" y="19.2" font-size="14.3" textLength="532.5" lengthAdjust="spacingAndGlyphs" font-family="Liberation Sans" font-weight="normal" fill="#000" style="white-space:pre" >Eeschema — inverting_amplifier_circuit.sch [/] — D:¥KiCad¥inverting_amplifier_circuit</text><text x="6.5" y="44.2" font-size="13.2" textLength="38.0" lengthAdjust="spacingAndGlyphs" font-family="Liberation Sans" font-weight="normal" fill="#000" style="white-space:pre" >ファイル</text><text x="50.8" y="43.8" font-size="13" textLength="14.5" lengthAdjust="spacingAndGlyphs" font-family="Liberation Sans" font-weight="normal" fill="#000" style="white-space:pre" >(F)</text><text x="76.8" y="44.2" font-size="13.2" textLength="27.60000000000001" lengthAdjust="spacingAndGlyphs" font-family="Liberation Sans" font-weight="normal" fill="#000" style="white-space:pre" >編集</text><text x="110.7" y="43.8" font-size="13" textLength="14.0" lengthAdjust="spacingAndGlyphs" font-family="Liberation Sans" font-weight="normal" fill="#000" style="white-space:pre" >(E)</text><text x="136.7" y="44.2" font-size="13.2" textLength="27.100000000000023" lengthAdjust="spacingAndGlyphs" font-family="Liberation Sans" font-weight="normal" fill="#000" style="white-space:pre" >表示</text><text x="169.3" y="43.8" font-size="13" textLength="16.399999999999977" lengthAdjust="spacingAndGlyphs" font-family="Liberation Sans" font-weight="normal" fill="#000" style="white-space:pre" >(V)</text><text x="197.3" y="44.2" font-size="13.2" textLength="27.5" lengthAdjust="spacingAndGlyphs" font-family="Liberation Sans" font-weight="normal" fill="#000" style="white-space:pre" >配置</text><text x="229.8" y="43.8" font-size="13" textLength="15.399999999999977" lengthAdjust="spacingAndGlyphs" font-family="Liberation Sans" font-weight="normal" fill="#000" style="white-space:pre" >(P)</text><text x="257.3" y="44.2" font-size="13.2" textLength="27.899999999999977" lengthAdjust="spacingAndGlyphs" font-family="Liberation Sans" font-weight="normal" fill="#000" style="white-space:pre" >検査</text><text x="289.9" y="43.8" font-size="13" textLength="11.600000000000023" lengthAdjust="spacingAndGlyphs" font-family="Liberation Sans" font-weight="normal" fill="#000" style="white-space:pre" >(I)</text><text x="312.7" y="44.2" font-size="13.2" textLength="31.900000000000034" lengthAdjust="spacingAndGlyphs" font-family="Liberation Sans" font-weight="normal" fill="#000" style="white-space:pre" >ツール</text><text x="349.3" y="43.8" font-size="13" textLength="14.800000000000011" lengthAdjust="spacingAndGlyphs" font-family="Liberation Sans" font-weight="normal" fill="#000" style="white-space:pre" >(T)</text><text x="376.1" y="44.2" font-size="13.2" textLength="27.099999999999966" lengthAdjust="spacingAndGlyphs" font-family="Liberation Sans" font-weight="normal" fill="#000" style="white-space:pre" >設定</text><text x="408.7" y="43.8" font-size="13" textLength="12.400000000000034" lengthAdjust="spacingAndGlyphs" font-family="Liberation Sans" font-weight="normal" fill="#000" style="white-space:pre" >(r)</text><text x="432.3" y="44.2" font-size="13.2" textLength="34.39999999999998" lengthAdjust="spacingAndGlyphs" font-family="Liberation Sans" font-weight="normal" fill="#000" style="white-space:pre" >ヘルプ</text><text x="471.4" y="43.8" font-size="13" textLength="18.100000000000023" lengthAdjust="spacingAndGlyphs" font-family="Liberation Sans" font-weight="normal" fill="#000" style="white-space:pre" >(H)</text><text x="674" y="809.8" font-size="14.8" textLength="38.5" lengthAdjust="spacingAndGlyphs" font-family="Liberation Sans" font-weight="normal" fill="#000" style="white-space:pre" >Z 0.99</text><text x="749.5" y="809.8" font-size="14.8" textLength="110.5" lengthAdjust="spacingAndGlyphs" font-family="Liberation Sans" font-weight="normal" fill="#000" style="white-space:pre" >X 350.50  Y 26.67</text><text x="965" y="809.8" font-size="14.8" textLength="202.5" lengthAdjust="spacingAndGlyphs" font-family="Liberation Sans" font-weight="normal" fill="#000" style="white-space:pre" >dx 350.50  dy 26.67  dist 351.51</text><text x="1298" y="809.8" font-size="14.8" textLength="24.5" lengthAdjust="spacingAndGlyphs" font-family="Liberation Sans" font-weight="normal" fill="#000" style="white-space:pre" >mm</text><text x="2" y="809.2" font-size="13.6" textLength="45" lengthAdjust="spacingAndGlyphs" font-family="Liberation Sans" font-weight="normal" fill="#000" style="white-space:pre" >ネット数</text><text x="52.5" y="809.8" font-size="14.8" textLength="7.5" lengthAdjust="spacingAndGlyphs" font-family="Liberation Sans" font-weight="normal" fill="#000" style="white-space:pre" >=</text><text x="64.8" y="809.8" font-size="14.8" textLength="15.700000000000003" lengthAdjust="spacingAndGlyphs" font-family="Liberation Sans" font-weight="normal" fill="#000" style="white-space:pre" >74</text>
<rect x="735" y="175" width="514" height="61" fill="#ffe599" stroke="#b8b8b8" stroke-width="2"/>
<text y="215.6" font-size="36.3" font-weight="bold" fill="#ff0000" font-family="Liberation Sans"><tspan x="734.6 772.4 804.4 830.2 858.6 891.3 919.1 949.9 986.1 1024.6 1060.4 1078.2 1113.9 1141.3 1169.2 1200.3">「ネットリストを生成」をクリック</tspan></text>
<path d="M993 174.5L1027.5 96" stroke="#ff0000" stroke-width="2.6" fill="none"/>
<path d="M1021.3 98L1029 92L1030.5 101.5" stroke="#ff0000" stroke-width="2.6" fill="none" stroke-linejoin="miter"/>
<rect x="1013.5" y="51.5" width="32" height="38" fill="none" stroke="#ff0000" stroke-width="3"/>

</svg>
</body></html>
